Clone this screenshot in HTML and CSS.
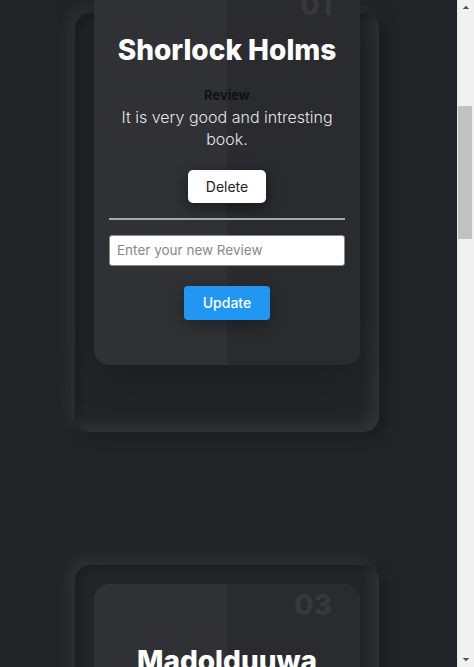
FILE: index.html
```html
<!DOCTYPE html>
<html lang="en">
<head>
<meta charset="utf-8">
<title>Book Reviews</title>
<link rel="stylesheet" href="styles.css">
</head>
<body>
<main class="page">
  <header class="page-header">
    <h1 class="page-title">Book Reviews</h1>
    <form class="add-form">
      <input class="field" placeholder="Book name">
      <input class="field" placeholder="Your review">
      <button class="btn btn-update" type="button">Add</button>
    </form>
  </header>

  <section class="card-list">
    <article class="card is-raised">
      <div class="box">
        <span class="num">01</span>
        <div class="content">
          <h3 class="title">Shorlock Holms</h3>
          <div class="review-label">Review</div>
          <p class="review-text">It is very good and intresting book.</p>
          <button class="btn btn-delete" type="button">Delete</button>
          <hr class="divider">
          <input class="review-input" placeholder="Enter your new Review">
          <button class="btn btn-update" type="button">Update</button>
        </div>
      </div>
    </article>

    <article class="card">
      <div class="box">
        <span class="num">03</span>
        <div class="content">
          <h3 class="title">Madolduuwa</h3>
          <div class="review-label">Review</div>
          <p class="review-text">A lovely story.</p>
          <button class="btn btn-delete" type="button">Delete</button>
          <hr class="divider">
          <input class="review-input" placeholder="Enter your new Review">
          <button class="btn btn-update" type="button">Update</button>
        </div>
      </div>
    </article>

    <article class="card">
      <div class="box">
        <span class="num">04</span>
        <div class="content">
          <h3 class="title">Gamperaliya</h3>
          <div class="review-label">Review</div>
          <p class="review-text">A classic novel.</p>
          <button class="btn btn-delete" type="button">Delete</button>
          <hr class="divider">
          <input class="review-input" placeholder="Enter your new Review">
          <button class="btn btn-update" type="button">Update</button>
        </div>
      </div>
    </article>

    <article class="card">
      <div class="box">
        <span class="num">05</span>
        <div class="content">
          <h3 class="title">Hath Pana</h3>
          <div class="review-label">Review</div>
          <p class="review-text">Fun to read.</p>
          <button class="btn btn-delete" type="button">Delete</button>
          <hr class="divider">
          <input class="review-input" placeholder="Enter your new Review">
          <button class="btn btn-update" type="button">Update</button>
        </div>
      </div>
    </article>

    <article class="card">
      <div class="box">
        <span class="num">06</span>
        <div class="content">
          <h3 class="title">Golu Hadawatha</h3>
          <div class="review-label">Review</div>
          <p class="review-text">Beautiful and sad.</p>
          <button class="btn btn-delete" type="button">Delete</button>
          <hr class="divider">
          <input class="review-input" placeholder="Enter your new Review">
          <button class="btn btn-update" type="button">Update</button>
        </div>
      </div>
    </article>
  </section>
</main>

<div class="scrollbar" aria-hidden="true">
  <div class="sb-arrow">
    <svg width="17" height="17" viewBox="0 0 17 17"><path d="M5 9 L8.5 5.5 L12 9 Z" fill="#505050"/></svg>
  </div>
  <div class="sb-track">
    <div class="sb-thumb"></div>
  </div>
  <div class="sb-arrow">
    <svg width="17" height="17" viewBox="0 0 17 17"><path d="M5 8 L12 8 L8.5 11.5 Z" fill="#505050"/></svg>
  </div>
</div>
<script src="script.js"></script>
</body>
</html>
```

FILE: styles.css
```css
* {
  box-sizing: border-box;
}

html {
  scroll-behavior: auto;
}

body {
  margin: 0;
  padding-right: 17px;
  background: #232427;
  font-family: Inter, "Noto Sans", sans-serif;
  color: #fff;
}

.page {
  display: flex;
  flex-direction: column;
}

.page-header {
  height: 392px;
  display: flex;
  flex-direction: column;
  align-items: center;
  justify-content: center;
  gap: 20px;
}

.page-title {
  margin: 0;
  font-size: 28px;
  font-weight: 700;
}

.add-form {
  display: flex;
  flex-direction: column;
  align-items: center;
  gap: 12px;
  width: 236px;
}

.field {
  width: 100%;
  height: 31px;
  padding: 0 8px;
  border: 1px solid #767676;
  border-radius: 3px;
  font-family: inherit;
  font-size: 13.5px;
}

.card-list {
  display: flex;
  flex-direction: column;
  align-items: center;
  gap: 133px;
  padding: 67px 3px 89px 0;
}

.card {
  width: 304px;
  height: 419px;
  padding: 19px;
  border-radius: 15px;
  box-shadow: inset 5px 5px 5px rgba(0, 0, 0, 0.2),
    inset -5px -5px 15px rgba(255, 255, 255, 0.08),
    5px 5px 15px rgba(0, 0, 0, 0.3),
    -5px -5px 15px rgba(255, 255, 255, 0.08);
}

.box {
  position: relative;
  height: 100%;
  border-radius: 15px;
  background: linear-gradient(to right, #303135 50%, #2a2b2f 50%);
  display: flex;
  align-items: center;
  justify-content: center;
}

.is-raised .box {
  transform: translateY(-48px);
  box-shadow: 0 10px 40px rgba(0, 0, 0, 0.2);
}

.num {
  position: absolute;
  top: 7px;
  right: 28px;
  font-size: 28px;
  line-height: 28px;
  font-weight: 800;
  color: rgba(255, 255, 255, 0.08);
}

.content {
  width: 100%;
  padding: 3px 15px 0;
  display: flex;
  flex-direction: column;
  align-items: center;
  text-align: center;
}

.title {
  margin: 0 0 17.5px;
  font-size: 28px;
  line-height: 36px;
  font-weight: 800;
  color: #fff;
  white-space: nowrap;
}

.review-label {
  font-size: 13px;
  line-height: 18px;
  font-weight: 700;
  color: #111;
}

.review-text {
  margin: 2px 0 20px;
  font-size: 16px;
  line-height: 22px;
  font-weight: 300;
  color: rgba(255, 255, 255, 0.9);
}

.btn {
  border: none;
  font-family: inherit;
  font-size: 14px;
  cursor: pointer;
}

.btn-delete {
  width: 78px;
  height: 33px;
  border-radius: 5px;
  background: #fff;
  color: #222;
  font-weight: 400;
  box-shadow: 0 5px 15px rgba(0, 0, 0, 0.45);
}

.btn-update {
  width: 86px;
  height: 34px;
  border-radius: 4px;
  background: #2196f3;
  color: #fff;
  font-weight: 500;
  box-shadow: 0 5px 15px rgba(0, 0, 0, 0.3);
}

.divider {
  width: 100%;
  height: 2px;
  margin: 15px 0;
  border: none;
  background: #a8a8a8;
}

.review-input {
  width: 100%;
  height: 31px;
  margin: 0 0 20px;
  padding: 0 7px;
  border: 1px solid #8a8a8a;
  border-radius: 3px;
  background: #fff;
  font-family: inherit;
  font-size: 13.5px;
  color: #222;
}

.review-input::placeholder,
.field::placeholder {
  color: #888;
}

/* window scrollbar as it appears in the capture */
.scrollbar {
  position: fixed;
  top: 0;
  right: 0;
  bottom: 0;
  width: 17px;
  display: flex;
  flex-direction: column;
  background: #f1f1f1;
  border-left: 1px solid #e8e8e8;
}

.sb-arrow {
  height: 17px;
  display: flex;
  justify-content: center;
  align-items: center;
}

.sb-arrow svg {
  display: block;
}

.sb-track {
  flex: 1;
  padding: 89px 2px 0 0;
}

.sb-thumb {
  height: 133px;
  background: #c1c1c1;
}
```

FILE: script.js
```js
window.scrollTo(0, 446);
window.addEventListener('load', function () {
  window.scrollTo(0, 446);
});
```
